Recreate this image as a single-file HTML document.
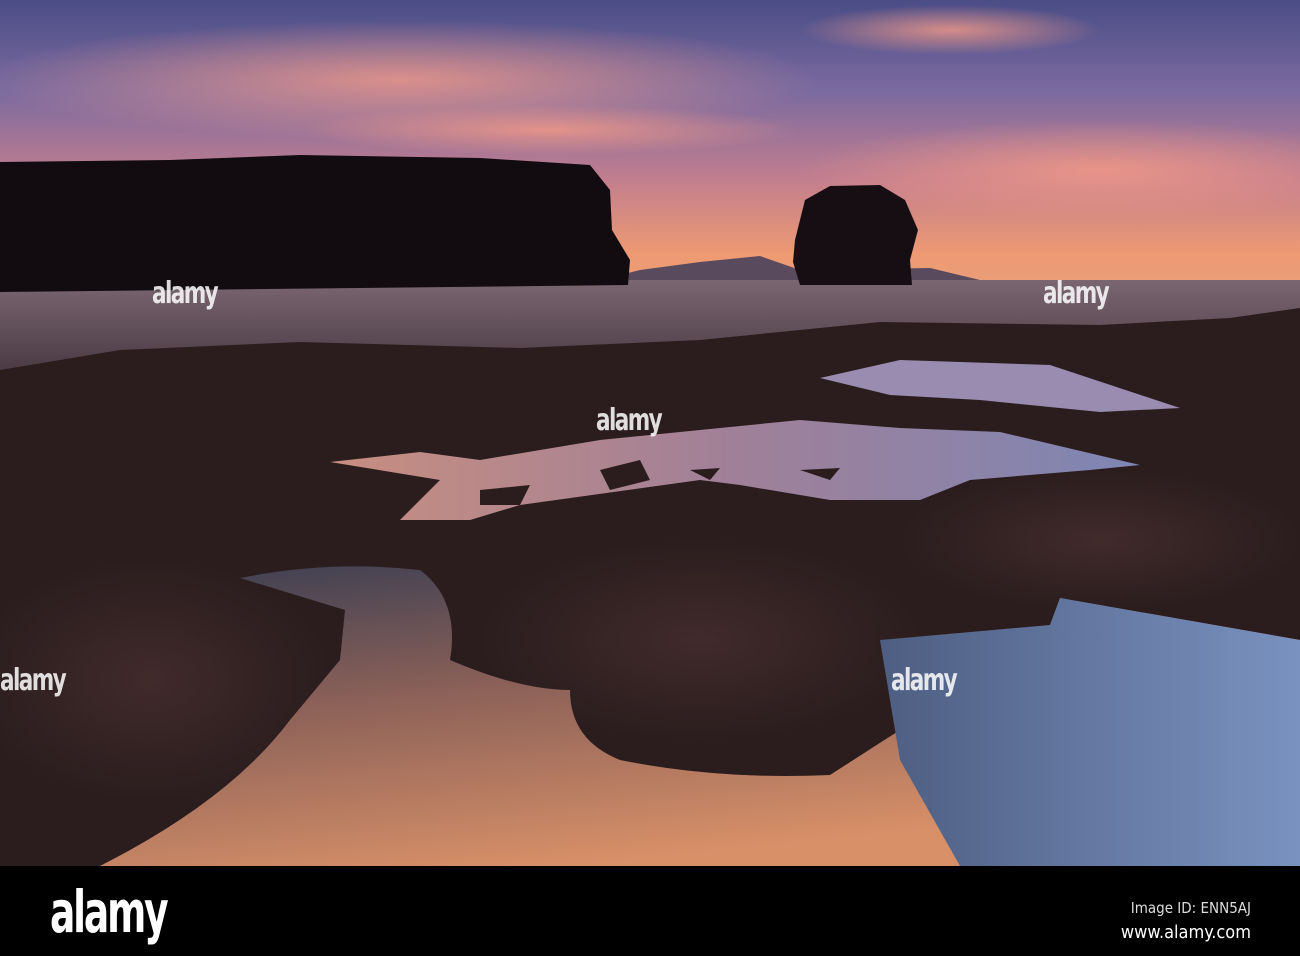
<!DOCTYPE html>
<html><head><meta charset="utf-8"><style>
html,body{margin:0;padding:0;background:#000;width:1300px;height:956px;overflow:hidden;position:relative}
svg{display:block}
.bar{position:absolute;left:0;top:866px;width:1300px;height:90px;background:#000}
.logo{position:absolute;left:50px;top:12px;color:#fff;font:bold 58px "DejaVu Sans Condensed","Liberation Sans Narrow",sans-serif;letter-spacing:-3px;transform:scaleX(0.72);transform-origin:left}
.r{position:absolute;right:49px;color:#fff;font-family:"DejaVu Sans Condensed","Liberation Sans Narrow",sans-serif;text-align:right}
.wm{position:absolute;color:rgba(255,255,255,0.55);font:bold 13px "DejaVu Sans Condensed",sans-serif;letter-spacing:-0.5px}
.wb{position:absolute;color:rgba(255,255,255,0.85);font:bold 30px "DejaVu Sans Condensed",sans-serif;letter-spacing:-2px;transform:scaleX(0.8);transform-origin:left}
</style></head><body>
<svg width="1300" height="866" viewBox="0 0 1300 866">
<defs>
<linearGradient id="sky" x1="0" y1="0" x2="0" y2="1">
<stop offset="0" stop-color="#4b4d86"/><stop offset="0.3" stop-color="#7a6aa0"/>
<stop offset="0.6" stop-color="#c27e8e"/><stop offset="0.85" stop-color="#ee9a72"/><stop offset="1" stop-color="#e7a07c"/></linearGradient>
<linearGradient id="sea" x1="0" y1="0" x2="0" y2="1">
<stop offset="0" stop-color="#7a6670"/><stop offset="1" stop-color="#463640"/></linearGradient>
<linearGradient id="pool1" x1="0" y1="0" x2="0.4" y2="1">
<stop offset="0" stop-color="#3a3e52"/><stop offset="0.45" stop-color="#8a6058"/><stop offset="1" stop-color="#d89068"/></linearGradient>
<linearGradient id="pool2" x1="0" y1="0" x2="1" y2="0">
<stop offset="0" stop-color="#4e5e82"/><stop offset="1" stop-color="#7a92c0"/></linearGradient>
<linearGradient id="pool3" x1="0" y1="0" x2="1" y2="0">
<stop offset="0" stop-color="#c88e80"/><stop offset="0.5" stop-color="#a08098"/><stop offset="1" stop-color="#7e86b4"/></linearGradient>
<radialGradient id="cl" cx="0.5" cy="0.5" r="0.5"><stop offset="0" stop-color="#f49a86" stop-opacity="0.8"/><stop offset="1" stop-color="#f49a86" stop-opacity="0"/></radialGradient>
<radialGradient id="rk" cx="0.5" cy="0.5" r="0.5"><stop offset="0" stop-color="#4a3030" stop-opacity="0.7"/><stop offset="1" stop-color="#4a3030" stop-opacity="0"/></radialGradient>
</defs>
<rect width="1300" height="300" fill="url(#sky)"/>
<ellipse cx="400" cy="80" rx="420" ry="60" fill="url(#cl)"/>
<ellipse cx="550" cy="130" rx="250" ry="25" fill="url(#cl)"/>
<ellipse cx="1100" cy="170" rx="300" ry="50" fill="url(#cl)"/>
<ellipse cx="950" cy="30" rx="150" ry="25" fill="url(#cl)"/>
<rect y="280" width="1300" height="100" fill="url(#sea)"/>
<path d="M600 280 L640 270 L700 262 L760 256 L800 270 L930 268 L980 280Z" fill="#5a4a5e"/>
<path d="M0 162 L170 160 L300 155 L480 158 L590 165 L610 190 L612 230 L630 260 L628 285 L0 292Z" fill="#120c10"/>
<path d="M795 240 L805 200 L830 186 L880 185 L905 200 L918 230 L910 260 L912 285 L800 285 L793 262Z" fill="#160e12"/>
<path d="M0 370 L120 350 L300 342 L520 348 L700 340 L880 322 L1100 325 L1230 318 L1300 308 L1300 866 L0 866Z" fill="#2b1d1e"/>
<ellipse cx="700" cy="640" rx="220" ry="100" fill="url(#rk)"/>
<ellipse cx="150" cy="680" rx="180" ry="120" fill="url(#rk)"/>
<ellipse cx="1100" cy="540" rx="200" ry="70" fill="url(#rk)"/>
<path d="M240 578 Q330 560 420 570 Q460 600 450 660 Q520 690 570 690 Q570 740 620 760 Q720 780 830 775 L900 730 L940 650 L1050 625 L1060 598 L1300 640 L1300 866 L100 866 Q230 800 290 720 L340 660 L345 610Z" fill="url(#pool1)"/>
<path d="M880 640 L1050 625 L1060 598 L1300 640 L1300 866 L960 866 L900 760Z" fill="url(#pool2)"/>
<path d="M330 462 L420 452 L480 460 L600 440 L700 430 L800 420 L900 428 L1000 432 L1140 465 L1090 470 L970 480 L920 500 L830 500 L740 485 L700 480 L520 505 L470 520 L400 520 L440 480Z" fill="url(#pool3)"/>
<path d="M820 378 L900 360 L1050 365 L1180 408 L1100 412 L980 400 L890 395Z" fill="#9a8cb0"/>
<path d="M480 490 L530 485 L520 505 L480 505Z M600 470 L640 460 L650 480 L610 490Z M690 470 L720 468 L710 480Z M800 470 L840 468 L830 480Z" fill="#2b1d1e"/>
</svg>
<div class="wb" style="left:152px;top:276px">alamy</div>
<div class="wb" style="left:596px;top:403px">alamy</div>
<div class="wb" style="left:1043px;top:276px">alamy</div>
<div class="wb" style="left:0px;top:663px">alamy</div>
<div class="wb" style="left:891px;top:663px">alamy</div>
<div class="bar">
<div class="logo">alamy</div>
<div class="r" style="top:33px;font-size:15px;color:#ddd">Image ID: ENN5AJ</div>
<div class="r" style="top:56px;font-size:18px">www.alamy.com</div>
</div>
</body></html>
